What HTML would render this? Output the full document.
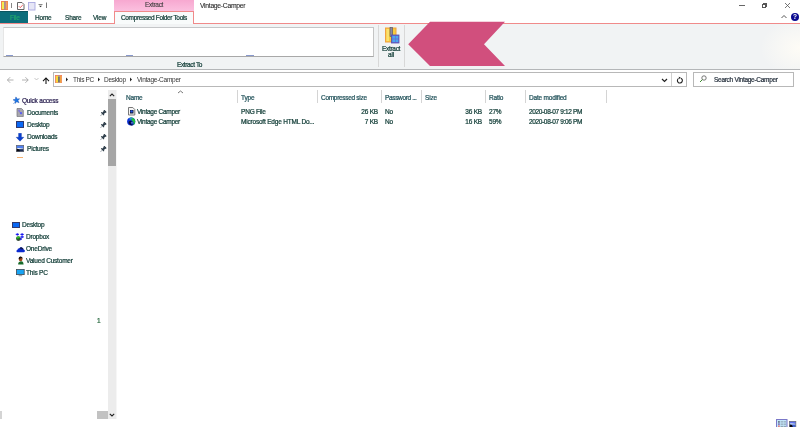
<!DOCTYPE html>
<html><head><meta charset="utf-8">
<style>
*{box-sizing:border-box;margin:0;padding:0}
html,body{width:800px;height:427px;overflow:hidden;background:#fff}
body{position:relative;font-family:"Liberation Sans",sans-serif;font-size:6.5px;color:#0e3a34;letter-spacing:-0.2px}
.a{position:absolute}
.t{position:absolute;white-space:nowrap;line-height:10px;-webkit-text-stroke:0.22px currentColor;will-change:transform}
.hd{color:#1f5058}
.sep{position:absolute;width:1px;background:#d8d8d8}
</style></head><body>

<!-- ===== Title bar ===== -->
<div class="a" style="left:0;top:0;width:800px;height:11px;background:#fff"></div>
<!-- QAT zip icon -->
<svg class="a" style="left:0;top:0" width="50" height="11">
<rect x="1.5" y="1.5" width="6" height="8" fill="#f6a878" stroke="#f08850" stroke-width="1"/>
<rect x="2" y="2" width="2.5" height="7" fill="#f4ec50"/>
<rect x="4.3" y="1.5" width="1.4" height="8" fill="#8878a8"/>
<rect x="5.7" y="2" width="1.5" height="7" fill="#f0a060"/>
<rect x="11" y="3" width="1" height="5" fill="#888"/>
<path d="M17.5 2.5H22L24 4.5V9.5H17.5Z" fill="#fff" stroke="#555" stroke-width="0.9"/>
<path d="M18.8 6.2L20.2 7.6L22.8 5" stroke="#e84848" fill="none" stroke-width="0.9"/>
<rect x="28.5" y="2.5" width="6.5" height="7.5" fill="#e6e6f6" stroke="#a8a8e0" stroke-width="0.9"/>
<rect x="38.5" y="4.3" width="4" height="0.7" fill="#555"/>
<path d="M39 5.7H42L40.5 7.3Z" fill="#333"/>
<rect x="46" y="2.5" width="1" height="5.5" fill="#777"/>
</svg>
<div class="a" style="left:114px;top:0;width:80px;height:11px;background:linear-gradient(#f7a8d0,#fbc0df)"></div>
<div class="t" style="left:145px;top:0.3px;color:#3a3a3a;letter-spacing:-0.3px;-webkit-text-stroke:0.1px #3a3a3a">Extract</div>
<div class="t" style="left:200px;top:1px;color:#2a2a2a;font-size:6.8px;letter-spacing:-0.3px;-webkit-text-stroke:0.1px #2a2a2a">Vintage-Camper</div>

<!-- window buttons -->
<div class="a" style="left:739px;top:5px;width:6px;height:1px;background:#666"></div>
<div class="a" style="left:762px;top:4px;width:4px;height:4px;border:1px solid #555"></div>
<div class="a" style="left:763px;top:3px;width:4px;height:4px;border-top:1px solid #555;border-right:1px solid #555"></div>
<svg class="a" style="left:784px;top:2px" width="7" height="7"><path d="M1 1L6 6M6 1L1 6" stroke="#555" stroke-width="0.8"/></svg>

<!-- ===== Tabs row ===== -->
<div class="a" style="left:0;top:11px;width:28px;height:12px;background:#0b6d7b;border-top:1px solid #0a5560"></div>
<div class="t" style="left:9.5px;top:13px;color:#22a86c;-webkit-text-stroke:0.15px #22a86c">File</div>
<div class="t" style="left:35px;top:13px">Home</div>
<div class="t" style="left:65px;top:13px">Share</div>
<div class="t" style="left:93px;top:13px">View</div>
<div class="a" style="left:114px;top:11px;width:80px;height:13px;background:#f8fbfb;border:1px solid #f08a8a;border-bottom:none"></div>
<div class="t" style="left:121px;top:13px;letter-spacing:-0.35px">Compressed Folder Tools</div>
<!-- pink line -->
<div class="a" style="left:0px;top:23px;width:114px;height:1px;background:#f08a8a"></div>
<div class="a" style="left:194px;top:23px;width:606px;height:1px;background:#f08a8a"></div>
<svg class="a" style="left:780px;top:14px" width="8" height="5"><path d="M1.5 4L4 1.5L6.5 4" stroke="#444" fill="none" stroke-width="0.9"/></svg>
<div class="a" style="left:791px;top:13px;width:8px;height:8px;border-radius:50%;background:#0a0a90"></div>
<div class="t" style="left:793.2px;top:12px;color:#fff;font-weight:bold;font-size:6.5px;-webkit-text-stroke:0">?</div>

<!-- ===== Ribbon ===== -->
<div class="a" style="left:0;top:24px;width:800px;height:45px;background:radial-gradient(ellipse 40px 30px at 800px 24px,#fefcf6 0%,rgba(241,243,244,0) 100%),#f1f3f4"></div>
<div class="a" style="left:3px;top:27px;width:371px;height:29.5px;background:#fff;border:1px solid #c4c4c4;border-top-color:#c4c6c8;border-left-color:#e6e6e6;border-bottom-color:#a8a8a8"></div>
<div class="a" style="left:6px;top:55px;width:7px;height:1px;background:#8898cc"></div>
<div class="a" style="left:126px;top:55px;width:7px;height:1px;background:#8898cc"></div>
<div class="a" style="left:246px;top:55px;width:8px;height:1px;background:#8898cc"></div>
<div class="t" style="left:176.5px;top:60.2px;letter-spacing:-0.38px">Extract To</div>
<div class="sep" style="left:378px;top:25px;height:42px"></div>
<!-- extract all icon -->
<svg class="a" style="left:380px;top:24px" width="24" height="22">
<rect x="5.5" y="4" width="10.5" height="14" fill="#f8cc3c" stroke="#f0a040" stroke-width="1"/>
<rect x="6.5" y="5" width="2.5" height="12" fill="#fbe070"/>
<rect x="10" y="3.5" width="2.6" height="9" fill="#8a8aa0" stroke="#505060" stroke-width="0.6"/>
<rect x="11.5" y="11" width="7.5" height="8" fill="#6a6ad0" stroke="#5050b0" stroke-width="0.8"/>
<rect x="12.4" y="12" width="2.6" height="2.6" fill="#48a8f0"/>
<rect x="15.6" y="12" width="2.6" height="2.6" fill="#48a8f0"/>
<rect x="12.4" y="15.4" width="2.6" height="2.6" fill="#48a8f0"/>
<rect x="15.6" y="15.4" width="2.6" height="2.6" fill="#48a8f0"/>
</svg>
<div class="t" style="left:382px;top:43.6px;letter-spacing:-0.3px">Extract</div>
<div class="t" style="left:387.5px;top:50px">all</div>
<div class="sep" style="left:404px;top:25px;height:42px"></div>
<!-- pink arrow -->
<svg class="a" style="left:0;top:0" width="800" height="80"><polygon points="430,21.7 505,21.7 484,44.2 505,66 430,66 408.2,44.2" fill="#d14f7d"/></svg>
<div class="a" style="left:0;top:69px;width:800px;height:1px;background:#b4b6b8"></div>

<!-- ===== Address row ===== -->
<div class="a" style="left:53px;top:72px;width:634px;height:15px;border:1px solid #b8b8b8;background:#fff"></div>
<div class="sep" style="left:671px;top:73px;height:13px;background:#cfcfcf"></div>
<div class="a" style="left:693px;top:72px;width:101px;height:15px;border:1px solid #b8b8b8;background:#fff"></div>

<!-- ===== Nav pane ===== -->
<div class="a" style="left:108px;top:90px;width:8px;height:329px;background:#ececec"></div>
<div class="a" style="left:108px;top:99px;width:8px;height:67px;background:#a6a6a6"></div>
<div class="a" style="left:116px;top:90px;width:1px;height:329px;background:#f6f6f6"></div>


<!-- nav arrows -->
<svg class="a" style="left:5.5px;top:75.5px" width="9" height="8"><path d="M7.5 4H1.5M4.2 1.2L1.4 4L4.2 6.8" stroke="#a0a0a0" fill="none" stroke-width="0.8"/></svg>
<svg class="a" style="left:20.5px;top:75.5px" width="9" height="8"><path d="M1 4H7.2M4.4 1.2L7.2 4L4.4 6.8" stroke="#a0a0a0" fill="none" stroke-width="0.8"/></svg>
<svg class="a" style="left:34px;top:77px" width="5" height="4"><path d="M0.5 1L2.5 3L4.5 1" stroke="#b0b0b0" fill="none" stroke-width="0.7"/></svg>
<svg class="a" style="left:42.3px;top:76.5px" width="8" height="8"><path d="M4 7V1.2M1 4.2L4 1L7 4.2" stroke="#111" fill="none" stroke-width="1.05"/></svg>
<!-- zip icon in address -->
<svg class="a" style="left:55px;top:75px" width="7" height="8"><rect x="0.5" y="0.5" width="6.2" height="7.4" fill="#f8d838" stroke="#f08060" stroke-width="0.9"/><rect x="4.6" y="1" width="1.6" height="6.5" fill="#f0a040"/><rect x="3.3" y="0.5" width="1.3" height="7.3" fill="#7888b0"/><rect x="3.6" y="2" width="0.7" height="5" fill="#303848"/></svg>
<svg class="a" style="left:65px;top:77px" width="4" height="5"><path d="M1 0.5L3 2.5L1 4.5Z" fill="#222"/></svg>
<div class="t" style="left:73px;top:74.5px;color:#333;-webkit-text-stroke:0;letter-spacing:-0.3px">This PC</div>
<svg class="a" style="left:96.5px;top:77px" width="4" height="5"><path d="M1 0.5L3 2.5L1 4.5Z" fill="#222"/></svg>
<div class="t" style="left:104px;top:74.5px;color:#333;-webkit-text-stroke:0;letter-spacing:-0.3px">Desktop</div>
<svg class="a" style="left:129px;top:77px" width="4" height="5"><path d="M1 0.5L3 2.5L1 4.5Z" fill="#222"/></svg>
<div class="t" style="left:137px;top:74.5px;color:#333;-webkit-text-stroke:0;letter-spacing:-0.25px">Vintage-Camper</div>
<svg class="a" style="left:661px;top:77.5px" width="7" height="5"><path d="M1 1L3.5 3.5L6 1" stroke="#222" fill="none" stroke-width="1.2"/></svg>
<svg class="a" style="left:676px;top:76px" width="8" height="8"><path d="M2.6 2.4A2.5 2.5 0 1 0 4.8 2.2" stroke="#222" fill="none" stroke-width="1.1"/><path d="M2.6 0.8L4.6 1.2L3.6 3.2Z" fill="#222"/></svg>
<svg class="a" style="left:699px;top:75px" width="8" height="8"><circle cx="5" cy="3" r="2.2" stroke="#555" fill="none" stroke-width="0.8"/><path d="M3.4 4.6L1 7" stroke="#3a8a2a" stroke-width="1"/></svg>
<div class="t" style="left:713.5px;top:74.5px;color:#2a3440;letter-spacing:-0.28px">Search Vintage-Camper</div>

<!-- ===== Nav pane items ===== -->
<svg class="a" style="left:12.3px;top:96px;transform:scale(0.9)" width="9" height="9"><polygon points="3.82,0.46 5.25,2.77 7.94,2.47 6.18,4.54 7.31,7.01 4.80,5.97 2.79,7.81 3.00,5.10 0.64,3.76 3.28,3.12" fill="#1a78e8" stroke="#2050b0" stroke-width="0.5"/><path d="M2.5 6.5L1 8.3" stroke="#6090e0" stroke-width="0.8"/></svg>
<div class="t" style="left:22px;top:96px;color:#2a2050">Quick access</div>
<svg class="a" style="left:16px;top:108px" width="8" height="9"><path d="M1 0.5H5.5L7.3 2.3V8.6H1Z" fill="#a8a8ae" stroke="#707078" stroke-width="0.7"/><path d="M2.3 1.8L3.8 1.8L3.8 3.6L5.8 4.5L5.8 6.2L4 5.5L3.3 3.8L2.3 3.6Z" fill="#7a70e0"/><rect x="4" y="4.3" width="2" height="1.8" fill="#5a60f0"/></svg>
<div class="t" style="left:27px;top:108px">Documents</div>
<div class="a" style="left:16px;top:121px;width:8px;height:6.8px;background:#0a68f4;border:0.8px solid #303a70"></div>
<div class="t" style="left:27px;top:120px">Desktop</div>
<svg class="a" style="left:15.2px;top:132.6px" width="10" height="9"><path d="M3.6 0.3H6.4V4.3H8.8L5 8.2L1.2 4.3H3.6Z" fill="#0a40d0" stroke="#0830a0" stroke-width="0.4"/></svg>
<div class="t" style="left:27px;top:132px">Downloads</div>
<svg class="a" style="left:16px;top:145px" width="8" height="7"><rect x="0.4" y="0.4" width="7.2" height="6.2" fill="#3050c0" stroke="#6a6a6a" stroke-width="0.8"/><rect x="0.8" y="0.8" width="6.4" height="2.2" fill="#5080f0"/><path d="M0.8 3.3C3 2.6 5 3.2 7.2 3.5V4.3H0.8Z" fill="#e8f0f8"/><path d="M0.8 4.3H7.2V6.2H0.8Z" fill="#203050"/><path d="M0.8 3.6L3 4.4L4 6.2H0.8Z" fill="#0a0a10"/></svg>
<div class="t" style="left:27px;top:144px">Pictures</div>
<div class="a" style="left:17px;top:156.5px;width:6px;height:1.5px;background:#f4b070"></div>
<!-- pins -->
<svg class="a" style="left:99.4px;top:109.5px" width="8" height="7"><g transform="rotate(45 4.2 3.2)"><rect x="2.6" y="0" width="3.2" height="1.2" fill="#1e2e3a"/><rect x="3.1" y="1" width="2.2" height="2.6" fill="#2a3a48"/><rect x="2.2" y="3.5" width="4" height="1" fill="#1e2e3a"/><path d="M4.2 4.5V7" stroke="#5a6a78" stroke-width="0.6"/></g></svg><svg class="a" style="left:99.4px;top:121.5px" width="8" height="7"><g transform="rotate(45 4.2 3.2)"><rect x="2.6" y="0" width="3.2" height="1.2" fill="#1e2e3a"/><rect x="3.1" y="1" width="2.2" height="2.6" fill="#2a3a48"/><rect x="2.2" y="3.5" width="4" height="1" fill="#1e2e3a"/><path d="M4.2 4.5V7" stroke="#5a6a78" stroke-width="0.6"/></g></svg><svg class="a" style="left:99.4px;top:133.5px" width="8" height="7"><g transform="rotate(45 4.2 3.2)"><rect x="2.6" y="0" width="3.2" height="1.2" fill="#1e2e3a"/><rect x="3.1" y="1" width="2.2" height="2.6" fill="#2a3a48"/><rect x="2.2" y="3.5" width="4" height="1" fill="#1e2e3a"/><path d="M4.2 4.5V7" stroke="#5a6a78" stroke-width="0.6"/></g></svg><svg class="a" style="left:99.4px;top:145.5px" width="8" height="7"><g transform="rotate(45 4.2 3.2)"><rect x="2.6" y="0" width="3.2" height="1.2" fill="#1e2e3a"/><rect x="3.1" y="1" width="2.2" height="2.6" fill="#2a3a48"/><rect x="2.2" y="3.5" width="4" height="1" fill="#1e2e3a"/><path d="M4.2 4.5V7" stroke="#5a6a78" stroke-width="0.6"/></g></svg>
<div class="a" style="left:12px;top:221.5px;width:8.3px;height:6.3px;background:#0a68f4;border:0.8px solid #303a70"></div>
<div class="t" style="left:22px;top:220px">Desktop</div>
<svg class="a" style="left:14px;top:231px" width="12" height="12"><path d="M1.8 3.4L3.4 2.5L5 3.4L3.4 4.3Z M6.5 3.4L8.1 2.5L9.7 3.4L8.1 4.3Z M6.5 5.9L8.1 5L9.7 5.9L8.1 6.8Z M4.8 8L6.4 7.1L8 8L6.4 8.9Z" fill="#1414f0" stroke="#1414f0" stroke-width="0.6"/><circle cx="4.3" cy="7.5" r="2.2" fill="#205a28"/><path d="M2.3 6.8A2.2 2.2 0 0 1 6.2 6.5L3.4 7.8Z" fill="#30c020"/><path d="M2.4 8.6A2.2 2.2 0 0 0 6.3 8.4L4 8.8Z" fill="#404040"/></svg>
<div class="t" style="left:26px;top:232px">Dropbox</div>
<svg class="a" style="left:15.5px;top:245.5px" width="9" height="7"><path d="M1.6 6.2H7.4A1.3 1.3 0 0 0 7.6 3.4A2.4 2.4 0 0 0 3.4 2.2A1.9 1.9 0 0 0 1.4 4.1A1.05 1.05 0 0 0 1.6 6.2Z" fill="#0a2ad0"/><path d="M3.4 2.2A2.4 2.4 0 0 1 7.6 3.4L5 3.3Z" fill="#101850"/></svg>
<div class="t" style="left:26px;top:244px">OneDrive</div>
<svg class="a" style="left:16.5px;top:256.3px" width="8" height="9"><path d="M1.8 6.2Q3.5 4.6 5.4 5.4Q6.6 6.3 6.6 8.6H1.2Q1 7 1.8 6.2Z" fill="#186a2a"/><ellipse cx="3.6" cy="3" rx="1.9" ry="2.3" fill="#a04818"/><path d="M1.6 2.6Q1.8 0.4 3.8 0.5Q5.8 0.7 5.5 2.8L4.6 2Q3 2.2 2.4 3.4Z" fill="#1a1410"/></svg>
<div class="t" style="left:26px;top:256px">Valued Customer</div>
<svg class="a" style="left:15.8px;top:268.8px" width="9" height="8"><rect x="0.4" y="0.4" width="7.8" height="5.2" fill="#18a4f4" stroke="#404850" stroke-width="0.8"/><rect x="2.6" y="6.2" width="3.6" height="1" fill="#9098a0"/></svg>
<div class="t" style="left:26px;top:268px">This PC</div>
<div class="t" style="left:97px;top:316px;color:#2a6a40">1</div>
<!-- scroll arrows -->
<svg class="a" style="left:109px;top:93px" width="6" height="4"><path d="M0.8 3.2L3 1L5.2 3.2" stroke="#222" fill="none" stroke-width="1.1"/></svg>
<svg class="a" style="left:109px;top:413px" width="6" height="4"><path d="M0.8 0.8L3 3L5.2 0.8" stroke="#222" fill="none" stroke-width="1.1"/></svg>
<div class="a" style="left:97px;top:411px;width:11px;height:8px;background:#c2c2c2"></div>
<div class="a" style="left:0;top:411px;width:1.5px;height:8px;background:#d4d4d4"></div>

<!-- ===== File list ===== -->
<div class="t hd" style="left:126px;top:92.5px">Name</div>
<svg class="a" style="left:177px;top:90px" width="7" height="4"><path d="M1 3L3.5 1L6 3" stroke="#555" fill="none" stroke-width="0.8"/></svg>
<div class="sep" style="left:237px;top:90px;height:13px;background:#d4d4d4"></div><div class="sep" style="left:317px;top:90px;height:13px;background:#d4d4d4"></div><div class="sep" style="left:381px;top:90px;height:13px;background:#d4d4d4"></div><div class="sep" style="left:421px;top:90px;height:13px;background:#d4d4d4"></div><div class="sep" style="left:485px;top:90px;height:13px;background:#d4d4d4"></div><div class="sep" style="left:525px;top:90px;height:13px;background:#d4d4d4"></div><div class="sep" style="left:606px;top:90px;height:13px;background:#d4d4d4"></div>
<div class="t hd" style="left:241px;top:92.5px">Type</div>
<div class="t hd" style="left:321px;top:92.5px;letter-spacing:-0.3px">Compressed size</div>
<div class="t hd" style="left:385px;top:92.5px;letter-spacing:-0.35px">Password ...</div>
<div class="t hd" style="left:425px;top:92.5px">Size</div>
<div class="t hd" style="left:489px;top:92.5px">Ratio</div>
<div class="t hd" style="left:529px;top:92.5px">Date modified</div>

<svg class="a" style="left:127px;top:106px" width="9" height="10"><path d="M1.5 1.5H5.8L7.8 3.5V9H1.5Z" fill="#f4f4f4" stroke="#6a6a6a" stroke-width="0.9"/><rect x="3" y="4" width="3.5" height="3.5" fill="#101830"/><circle cx="4.6" cy="5.4" r="1.2" fill="#2050e0"/></svg>
<div class="t" style="left:137px;top:107px;letter-spacing:-0.28px">Vintage Camper</div>
<div class="t" style="left:241px;top:107px">PNG File</div>
<div class="t" style="left:357px;top:107px;width:21px;text-align:right">26 KB</div>
<div class="t" style="left:385px;top:107px">No</div>
<div class="t" style="left:460px;top:107px;width:22px;text-align:right">36 KB</div>
<div class="t" style="left:489px;top:107px">27%</div>
<div class="t" style="left:529px;top:107px"><span style="letter-spacing:-0.35px">2020-08-07 9:12 PM</span></div>

<svg class="a" style="left:126.8px;top:117px" width="9" height="9"><circle cx="4.2" cy="4.5" r="4.1" fill="#0a30d8"/><path d="M3 0.6A4.1 4.1 0 0 1 8.3 4.5A4.1 4.1 0 0 1 6 8.2C7 6.5 6.8 4.6 5 4Z" fill="#22c040"/><path d="M2.2 1.3A4.1 4.1 0 0 1 6 1.1C4.5 1.6 3.5 2.5 3 3.5Z" fill="#2a90e0"/><path d="M1.5 5A3.2 3.2 0 0 0 6.5 7.8A3 3 0 0 1 3.6 5.2A1.6 1.6 0 0 1 5.6 4.6A2.5 2.5 0 0 0 1.5 5Z" fill="#050a40"/><circle cx="5" cy="5.8" r="0.8" fill="#7a8aa0"/></svg>
<div class="t" style="left:137px;top:117px;letter-spacing:-0.28px">Vintage Camper</div>
<div class="t" style="left:241px;top:117px">Microsoft Edge HTML Do...</div>
<div class="t" style="left:357px;top:117px;width:21px;text-align:right">7 KB</div>
<div class="t" style="left:385px;top:117px">No</div>
<div class="t" style="left:460px;top:117px;width:22px;text-align:right">16 KB</div>
<div class="t" style="left:489px;top:117px">59%</div>
<div class="t" style="left:529px;top:117px"><span style="letter-spacing:-0.35px">2020-08-07 9:06 PM</span></div>

<!-- view icons -->
<svg class="a" style="left:775px;top:418px" width="24" height="9">
<rect x="1.5" y="1.5" width="10.5" height="9" fill="#c4e6fa" stroke="#7a78c8" stroke-width="1"/>
<rect x="3" y="3" width="1.8" height="1.8" fill="#708090"/><rect x="3" y="5.2" width="1.8" height="1.8" fill="#8080c0"/><rect x="3" y="7.4" width="1.8" height="1.6" fill="#e08080"/>
<rect x="5.6" y="3.5" width="2.5" height="0.8" fill="#7a8a98"/><rect x="8.6" y="3.5" width="2.5" height="0.8" fill="#7a8a98"/>
<rect x="5.6" y="5.7" width="2.5" height="0.8" fill="#7a8a98"/><rect x="8.6" y="5.7" width="2.5" height="0.8" fill="#7a8a98"/>
<rect x="5.6" y="7.9" width="2.5" height="0.8" fill="#7a8a98"/><rect x="8.6" y="7.9" width="2.5" height="0.8" fill="#7a8a98"/>
<rect x="14.4" y="3.4" width="6.4" height="6" fill="#4060d0" stroke="#707070" stroke-width="0.8"/>
<rect x="14.8" y="3.8" width="5.6" height="1.6" fill="#6070f0"/>
<path d="M14.8 5.6C16.5 5 18.5 5.4 20.4 5.8V6.6H14.8Z" fill="#d8e8f4"/>
<path d="M14.8 6.4L17 7L18 9.4H14.8Z" fill="#0a0a14"/>
</svg>
</body></html>
